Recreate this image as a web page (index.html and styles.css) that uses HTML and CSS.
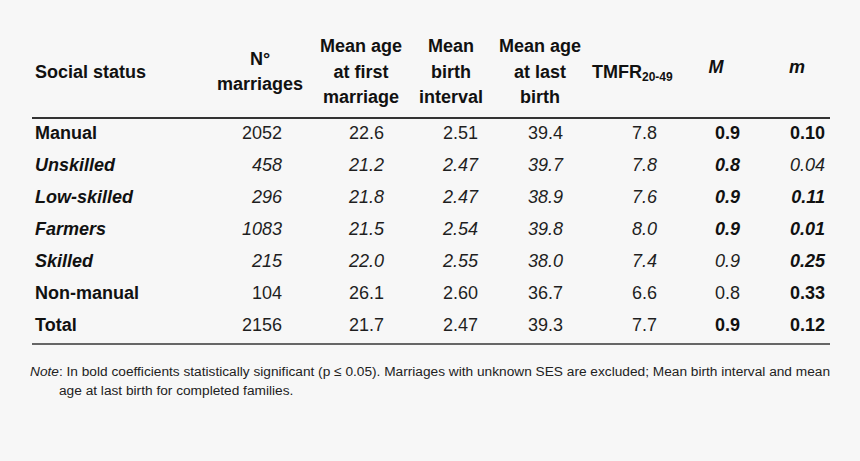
FILE: index.html
```html
<!DOCTYPE html>
<html lang="en">
<head>
<meta charset="utf-8">
<title>Social status table</title>
<link rel="stylesheet" href="styles.css">
</head>
<body>
<main class="page">
  <table class="data">
    <colgroup>
      <col class="c1"><col class="c2"><col class="c3"><col class="c4"><col class="c5"><col class="c6"><col class="c7"><col class="c8">
    </colgroup>
    <thead>
      <tr>
        <th class="label">Social status</th>
        <th>N°<br>marriages</th>
        <th>Mean age<br>at first<br>marriage</th>
        <th>Mean<br>birth<br>interval</th>
        <th>Mean age<br>at last<br>birth</th>
        <th class="nowrap">TMFR<span class="sub">20-49</span></th>
        <th class="coef"><i>M</i></th>
        <th class="coef"><i>m</i></th>
      </tr>
    </thead>
    <tbody>
      <tr>
        <td class="label">Manual</td><td>2052</td><td>22.6</td><td>2.51</td><td>39.4</td><td>7.8</td><td class="b">0.9</td><td class="b">0.10</td>
      </tr>
      <tr class="it">
        <td class="label">Unskilled</td><td>458</td><td>21.2</td><td>2.47</td><td>39.7</td><td>7.8</td><td class="b">0.8</td><td>0.04</td>
      </tr>
      <tr class="it">
        <td class="label">Low-skilled</td><td>296</td><td>21.8</td><td>2.47</td><td>38.9</td><td>7.6</td><td class="b">0.9</td><td class="b">0.11</td>
      </tr>
      <tr class="it">
        <td class="label">Farmers</td><td>1083</td><td>21.5</td><td>2.54</td><td>39.8</td><td>8.0</td><td class="b">0.9</td><td class="b">0.01</td>
      </tr>
      <tr class="it">
        <td class="label">Skilled</td><td>215</td><td>22.0</td><td>2.55</td><td>38.0</td><td>7.4</td><td>0.9</td><td class="b">0.25</td>
      </tr>
      <tr>
        <td class="label">Non-manual</td><td>104</td><td>26.1</td><td>2.60</td><td>36.7</td><td>6.6</td><td>0.8</td><td class="b">0.33</td>
      </tr>
      <tr>
        <td class="label">Total</td><td>2156</td><td>21.7</td><td>2.47</td><td>39.3</td><td>7.7</td><td class="b">0.9</td><td class="b">0.12</td>
      </tr>
    </tbody>
  </table>
  <p class="note"><i>Note</i>: In bold coefficients statistically significant (p ≤ 0.05). Marriages with unknown SES are excluded; Mean birth interval and mean age at last birth for completed families.</p>
</main>
</body>
</html>
```

FILE: styles.css
```css
html, body {
  margin: 0;
  padding: 0;
  background: #f7f7f7;
}

body {
  font-family: "Liberation Sans", Arial, Helvetica, sans-serif;
  color: #1f1f1f;
  width: 860px;
  height: 461px;
  overflow: hidden;
}

.page {
  padding-top: 34px;
}

.data {
  margin-left: 32px;
  width: 798px;
  table-layout: fixed;
  border-collapse: collapse;
  border-spacing: 0;
  font-size: 18px;
}

.c1 { width: 180px; }
.c2 { width: 96px; }
.c3 { width: 106px; }
.c4 { width: 74px; }
.c5 { width: 104px; }
.c6 { width: 80px; }
.c7 { width: 88px; }
.c8 { width: 70px; }

.data th {
  font-weight: bold;
  color: #111;
  line-height: 25.5px;
  padding: 0 0 6px;
  text-align: center;
  vertical-align: middle;
  border-bottom: 2px solid #333;
}

.data th.label {
  text-align: left;
  padding-left: 3px;
}

.data th.nowrap {
  white-space: nowrap;
}

.data th.coef {
  padding-bottom: 16px;
}

.data th:last-child {
  padding-left: 4px;
}

.sub {
  font-size: 12px;
  line-height: 0;
  position: relative;
  top: 3px;
}

.data td {
  line-height: 28px;
  padding: 0 0 4px;
  text-align: right;
  white-space: nowrap;
}

.data tbody tr:last-child td {
  border-bottom: 2px solid #666;
}

.data td.label {
  text-align: left;
  padding-left: 3px;
  font-weight: bold;
  color: #111;
}

.data td:nth-child(2) { padding-right: 26px; }
.data td:nth-child(3) { padding-right: 30px; }
.data td:nth-child(4) { padding-right: 10px; }
.data td:nth-child(5) { padding-right: 29px; }
.data td:nth-child(6) { padding-right: 15px; }
.data td:nth-child(7) { padding-right: 20px; }
.data td:nth-child(8) { padding-right: 5px; }

.data tr.it td {
  font-style: italic;
}

.data td.b {
  font-weight: bold;
  color: #111;
}

.note {
  margin: 17px 0 0 30px;
  width: 790px;
  font-size: 13.7px;
  line-height: 19px;
  color: #222;
  padding-left: 29px;
  text-indent: -29px;
}
```
